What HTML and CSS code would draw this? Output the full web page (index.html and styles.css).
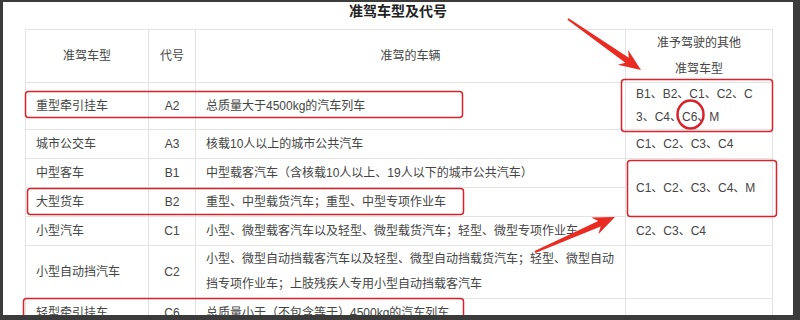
FILE: index.html
```html
<!DOCTYPE html>
<html lang="zh-CN">
<head>
<meta charset="utf-8">
<title>准驾车型及代号</title>
<link rel="stylesheet" href="styles.css">
</head>
<body>
<div class="panel">
  <h1 class="title">准驾车型及代号</h1>
  <table class="grid">
    <colgroup>
      <col class="c-type">
      <col class="c-code">
      <col class="c-veh">
      <col class="c-other">
    </colgroup>
    <tr class="hd">
      <td class="ctr">准驾车型</td>
      <td class="ctr">代号</td>
      <td class="ctr">准驾的车辆</td>
      <td class="ctr">准予驾驶的其他<br>准驾车型</td>
    </tr>
    <tr class="r-a2">
      <td>重型牵引挂车</td>
      <td class="ctr">A2</td>
      <td>总质量大于4500kg的汽车列车</td>
      <td>B1、B2、C1、C2、C<br>3、C4、C6、M</td>
    </tr>
    <tr>
      <td>城市公交车</td>
      <td class="ctr">A3</td>
      <td>核载10人以上的城市公共汽车</td>
      <td>C1、C2、C3、C4</td>
    </tr>
    <tr>
      <td>中型客车</td>
      <td class="ctr">B1</td>
      <td>中型载客汽车（含核载10人以上、19人以下的城市公共汽车）</td>
      <td rowspan="2">C1、C2、C3、C4、M</td>
    </tr>
    <tr>
      <td>大型货车</td>
      <td class="ctr">B2</td>
      <td>重型、中型载货汽车；重型、中型专项作业车</td>
    </tr>
    <tr>
      <td>小型汽车</td>
      <td class="ctr">C1</td>
      <td>小型、微型载客汽车以及轻型、微型载货汽车；轻型、微型专项作业车</td>
      <td>C2、C3、C4</td>
    </tr>
    <tr class="r-c2">
      <td>小型自动挡汽车</td>
      <td class="ctr">C2</td>
      <td>小型、微型自动挡载客汽车以及轻型、微型自动挡载货汽车；轻型、微型自动<br>挡专项作业车；上肢残疾人专用小型自动挡载客汽车</td>
      <td></td>
    </tr>
    <tr>
      <td>轻型牵引挂车</td>
      <td class="ctr">C6</td>
      <td>总质量小于（不包含等于）4500kg的汽车列车</td>
      <td></td>
    </tr>
  </table>

  <svg class="marks" width="800" height="320" viewBox="0 0 800 320" aria-hidden="true">
    <g fill="none" stroke="#d8232a" stroke-width="1.5">
      <rect x="25.5" y="91.5" width="437" height="26" rx="3"/>
      <rect x="621.5" y="79.5" width="151" height="52" rx="3"/>
      <rect x="27.5" y="188.5" width="436" height="26" rx="3"/>
      <rect x="627.5" y="160.5" width="149" height="56" rx="3"/>
      <rect x="23.5" y="298.5" width="440" height="30" rx="3"/>
      <ellipse cx="690.5" cy="114.5" rx="13" ry="14" stroke-width="2.5"/>
    </g>
    <g fill="#ea2b22">
      <polygon points="567.4,19.8 625.3,62.7 617.8,64.8 641,70 628.1,50 628.8,57.8 568.6,18.2"/>
      <polygon points="535.4,252.9 600.6,226.6 598.5,234.1 615,217 591.2,217.6 598.2,221.1 534.6,251.1"/>
    </g>
  </svg>
</div>
</body>
</html>
```

FILE: styles.css
```css
html, body {
  margin: 0;
  padding: 0;
}

body {
  background: #3b3b3b;
  width: 800px;
  height: 320px;
  overflow: hidden;
  font-family: "Liberation Sans", "Noto Sans CJK SC", sans-serif;
}

.panel {
  position: relative;
  background: #ffffff;
  margin: 2px 7px 0 3px;
  height: 313px;
  overflow: hidden;
}

.title {
  margin: 0 0 11px 0;
  font-size: 14px;
  line-height: 16px;
  font-weight: bold;
  color: #222222;
  text-align: center;
  font-family: "Noto Sans CJK SC", sans-serif;
}

.grid {
  margin-left: 22px;
  width: 747px;
  table-layout: fixed;
  border-collapse: collapse;
  font-size: 12px;
  color: #444444;
}

.c-type { width: 123px; }
.c-code { width: 47px; }
.c-veh { width: 430px; }
.c-other { width: 147px; }

.grid td {
  border: 1px solid #e3e3e3;
  padding: 2px 10px;
  line-height: 24px;
  vertical-align: middle;
  white-space: nowrap;
  overflow: hidden;
}

.grid .ctr {
  text-align: center;
}

.grid .hd td {
  padding-top: 0;
  padding-bottom: 0;
  line-height: 26px;
}

.grid .r-a2 td {
  padding-top: 0;
  padding-bottom: 0;
  line-height: 23px;
}

.grid .r-c2 td {
  padding-top: 1px;
  padding-bottom: 1px;
  line-height: 25px;
}

.marks {
  position: absolute;
  left: -3px;
  top: -2px;
  pointer-events: none;
}
```
